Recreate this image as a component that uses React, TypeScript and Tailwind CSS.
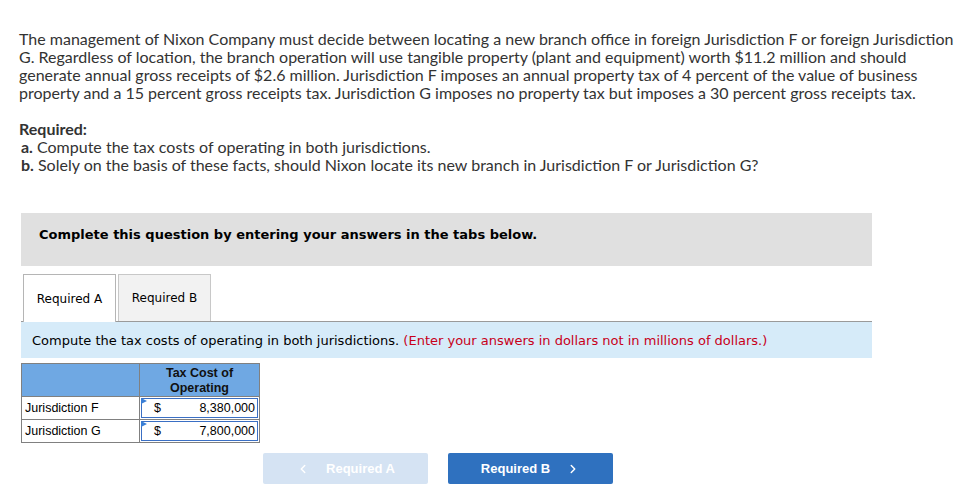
import { ChevronLeft, ChevronRight } from "lucide-react";

const rows = [
  { label: "Jurisdiction F", value: "8,380,000" },
  { label: "Jurisdiction G", value: "7,800,000" },
];

export default function App() {
  return (
    <div className="min-h-screen bg-white px-[19px] pt-[30px] text-[#222]">
      <p className="max-w-[945px] font-['Lato','Open_Sans',sans-serif] text-[16px] leading-[18px] text-[#333]">
        The management of Nixon Company must decide between locating a new branch office in foreign Jurisdiction F or
        foreign Jurisdiction G. Regardless of location, the branch operation will use tangible property (plant and
        equipment) worth $11.2 million and should generate annual gross receipts of $2.6 million. Jurisdiction F imposes an
        annual property tax of 4 percent of the value of business property and a 15 percent gross receipts tax.
        Jurisdiction G imposes no property tax but imposes a 30 percent gross receipts tax.
      </p>

      <div className="mt-[18px] font-['Lato','Open_Sans',sans-serif] text-[16px] leading-[18px] text-[#333]">
        <p className="font-bold">Required:</p>
        <p className="pl-[2px]">
          <span className="font-bold">a.</span> Compute the tax costs of operating in both jurisdictions.
        </p>
        <p className="pl-[2px]">
          <span className="font-bold">b.</span> Solely on the basis of these facts, should Nixon locate its new branch in
          Jurisdiction F or Jurisdiction G?
        </p>
      </div>

      <div className="ml-[2px] w-[851px] font-['DejaVu_Sans',Verdana,sans-serif]">
        <div className="mt-[39px] h-[53px] bg-[#e0e0e0] px-[18px] pt-[12px] text-[13px] font-bold text-black">
          Complete this question by entering your answers in the tabs below.
        </div>

        <div className="mt-[8px] flex gap-[2px] pl-[2px] text-[12px] text-black">
          <div className="relative -mb-px flex h-[48px] w-[93px] items-center justify-center border border-b-0 border-[#b5b5b5] bg-white">
            Required A
          </div>
          <div className="flex h-[47px] w-[93px] items-center justify-center border border-b-0 border-[#c8c8c8] bg-[#f2f2f2]">
            Required B
          </div>
        </div>
        <div className="border-t border-[#9a9a9a]" />

        <div className="flex h-[36px] items-center bg-[#d6ebf9] px-[11px] pt-[2px] text-[13px] text-black">
          Compute the tax costs of operating in both jurisdictions.&nbsp;
          <span className="text-[#c8001a]">(Enter your answers in dollars not in millions of dollars.)</span>
        </div>

        <table className="mt-[5px] border-collapse font-['Liberation_Sans',Arial,sans-serif] text-[12.5px] text-black">
          <thead>
            <tr className="bg-[#6fa8e3]">
              <th className="h-[33px] w-[118px] border border-[#808080]" />
              <th className="w-[120px] border border-[#808080] pt-px text-center font-bold leading-[15px] text-[#111]">
                Tax Cost of
                <br />
                Operating
              </th>
            </tr>
          </thead>
          <tbody>
            {rows.map((r) => (
              <tr key={r.label}>
                <td className="h-[23px] border border-[#808080] pl-[3px]">{r.label}</td>
                <td className="relative border border-[#808080] p-0">
                  <div className="mx-px flex h-[20px] items-center justify-between border border-[#3a6fc4] bg-white pl-[12px] pr-[2px]">
                    <span>$</span>
                    <span>{r.value}</span>
                  </div>
                  <span className="absolute left-px top-px h-0 w-0 border-y-[3px] border-l-[6px] border-y-transparent border-l-[#3a7fd6]" />
                </td>
              </tr>
            ))}
          </tbody>
        </table>

        <div className="mt-[10px] flex gap-[20px] pl-[242px] font-['Liberation_Sans',Arial,sans-serif] text-[13px] font-bold text-white">
          <button className="flex h-[31px] w-[165px] items-center justify-center gap-[16px] rounded-[2px] bg-[#d5e3f3]">
            <ChevronLeft size={14} strokeWidth={2.5} />
            <span>Required A</span>
          </button>
          <button className="flex h-[31px] w-[165px] items-center justify-center gap-[16px] rounded-[2px] bg-[#2f71bf]">
            <span>Required B</span>
            <ChevronRight size={14} strokeWidth={2.5} />
          </button>
        </div>
      </div>
    </div>
  );
}
